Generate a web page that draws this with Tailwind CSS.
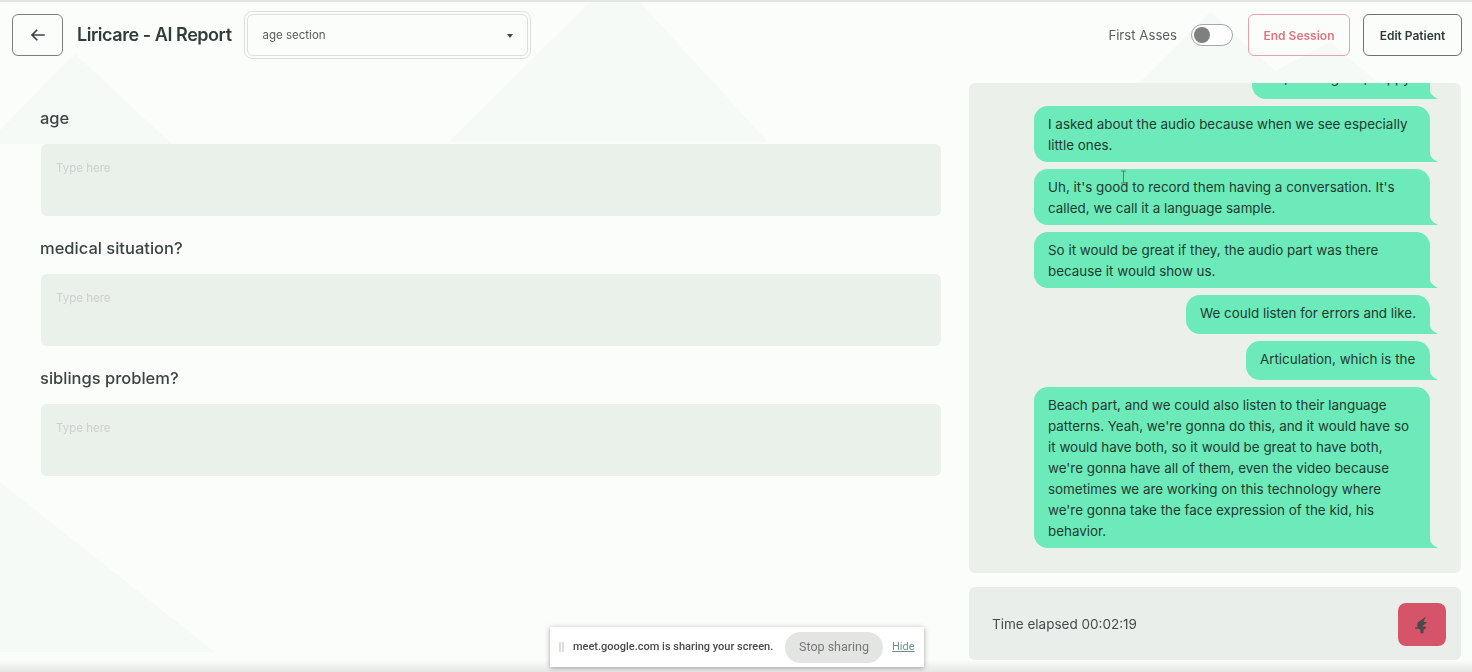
<!DOCTYPE html>
<html><head><meta charset="utf-8">
<script src="https://cdn.jsdelivr.net/npm/@tailwindcss/browser@4"></script>
<title>Liricare</title></head>
<body class="bg-[#fbfdfa] font-['Inter','Noto_Sans',sans-serif] text-[#2f3a36]">
<div class="relative w-[1472px] h-[672px] overflow-hidden border-t-2 border-[#e2e5e2] blur-[0.4px]">
  <svg class="absolute inset-0" width="1472" height="672" viewBox="0 0 1472 672" fill="#f6faf7">
    <polygon points="0,128 75,52 172,142 0,142"/>
    <polygon points="448,140 590,0 640,0 768,140"/>
    <polygon points="1138,82 1210,10 1290,82"/>
    <polygon points="1250,82 1330,40 1380,82"/>
    <polygon points="0,480 215,650 0,650"/>
  </svg>

  <div class="relative flex flex-col h-full">
    <header class="h-[81px] flex items-start pl-3 pr-[10px] pt-3">
      <button class="w-[51px] h-[42px] rounded-md border border-[#7b7f7c] flex items-center justify-center">
        <svg width="18" height="18" viewBox="0 0 24 24" fill="none" stroke="#3c4441" stroke-width="2.2"><path d="M21 12H4M11 5l-7 7 7 7"/></svg>
      </button>
      <h1 class="ml-[14px] mt-[10px] text-[18px] leading-[22px] font-semibold text-[#2f3d38] tracking-[-0.45px]">Liricare - AI Report</h1>
      <div class="ml-[12px] -mt-[3px] w-[287px] h-[48px] rounded-lg border border-[#dcdfdc] p-[2px]">
        <div class="h-full rounded-md border border-[#dcdfdc] flex items-center justify-between pl-[15px] pr-[14px] pt-px">
          <span class="text-[11.5px] text-[#555c59]">age section</span>
          <span class="w-0 h-0 border-x-[3.5px] border-x-transparent border-t-[4px] border-t-[#444]"></span>
        </div>
      </div>
      <div class="ml-auto flex items-center h-[42px]">
        <span class="text-[13.2px] pt-px text-[#5a615e]">First Asses</span>
        <div class="ml-[14px] w-[42px] h-[22px] rounded-full border border-[#a5a9a6] bg-[#fdfefd] flex items-center pl-[2px]">
          <div class="w-[16px] h-[16px] rounded-full bg-[#7d807e]"></div>
        </div>
        <button class="ml-[15px] w-[102px] h-[42px] pt-px rounded-md border border-[#e2a3ab] text-[12px] font-semibold text-[#dc7584]">End Session</button>
        <button class="ml-[13px] w-[99px] h-[42px] pt-px rounded-md border border-[#6f7370] text-[12px] font-semibold text-[#2f3a36]">Edit Patient</button>
      </div>
    </header>

    <main class="flex-1 flex min-h-0">
      <section class="w-[969px] pl-10 pr-7 pt-[23px] flex flex-col">
        <label class="text-[16.5px] leading-[24px] font-medium text-[#3b4441]">age</label>
        <div class="mt-[14px] mb-[20px] ml-px h-[72px] rounded-md bg-[#eaf0ea] px-[15px] pt-[16px] text-[11.5px] leading-4 text-[#ccd1cd]">Type here</div>
        <label class="text-[16.5px] leading-[24px] font-medium text-[#3b4441]">medical situation?</label>
        <div class="mt-[14px] mb-[20px] ml-px h-[72px] rounded-md bg-[#eaf0ea] px-[15px] pt-[16px] text-[11.5px] leading-4 text-[#ccd1cd]">Type here</div>
        <label class="text-[16.5px] leading-[24px] font-medium text-[#3b4441]">siblings problem?</label>
        <div class="mt-[14px] ml-px h-[72px] rounded-md bg-[#eaf0ea] px-[15px] pt-[16px] text-[11.5px] leading-4 text-[#ccd1cd]">Type here</div>
      </section>

      <aside class="w-[492px] flex flex-col">
        <div class="h-[490px] rounded-md bg-[#ebf0eb] overflow-hidden flex flex-col justify-end items-end pr-[31px] pb-[25px] gap-[7px] text-[13.4px] leading-[21px] text-[#1f3a30]">
          <div class="relative shrink-0 bg-[#6ceab9] rounded-[14px] rounded-br-none px-[14px] pt-[8px] pb-[10px] w-[178px]">Oh, that's great, happy<svg class="absolute -right-2 bottom-0" width="8" height="9" viewBox="0 0 8 9" fill="#6ceab9"><path d="M0 0C0 4 3 6 8 9H0z"/></svg></div>
          <div class="relative shrink-0 bg-[#6ceab9] rounded-[14px] rounded-br-none px-[14px] pt-[8px] pb-[6px] w-[396px]">I asked about the audio because when we see especially little ones.<svg class="absolute -right-2 bottom-0" width="8" height="9" viewBox="0 0 8 9" fill="#6ceab9"><path d="M0 0C0 4 3 6 8 9H0z"/></svg></div>
          <div class="relative shrink-0 bg-[#6ceab9] rounded-[14px] rounded-br-none px-[14px] pt-[8px] pb-[6px] w-[396px]">Uh, it's good to record them having a conversation. It's called, we call it a language sample.<svg class="absolute -right-2 bottom-0" width="8" height="9" viewBox="0 0 8 9" fill="#6ceab9"><path d="M0 0C0 4 3 6 8 9H0z"/></svg></div>
          <div class="relative shrink-0 bg-[#6ceab9] rounded-[14px] rounded-br-none px-[14px] pt-[8px] pb-[6px] w-[396px]">So it would be great if they, the audio part was there because it would show us.<svg class="absolute -right-2 bottom-0" width="8" height="9" viewBox="0 0 8 9" fill="#6ceab9"><path d="M0 0C0 4 3 6 8 9H0z"/></svg></div>
          <div class="relative shrink-0 bg-[#6ceab9] rounded-[14px] rounded-br-none px-[14px] pt-[8px] pb-[10px]">We could listen for errors and like.<svg class="absolute -right-2 bottom-0" width="8" height="9" viewBox="0 0 8 9" fill="#6ceab9"><path d="M0 0C0 4 3 6 8 9H0z"/></svg></div>
          <div class="relative shrink-0 bg-[#6ceab9] rounded-[14px] rounded-br-none px-[14px] pt-[8px] pb-[10px] w-[184px]">Articulation, which is the<svg class="absolute -right-2 bottom-0" width="8" height="9" viewBox="0 0 8 9" fill="#6ceab9"><path d="M0 0C0 4 3 6 8 9H0z"/></svg></div>
          <div class="relative shrink-0 bg-[#6ceab9] rounded-[14px] rounded-br-none px-[14px] pt-[8px] pb-[6px] w-[396px]">Beach part, and we could also listen to their language patterns. Yeah, we're gonna do this, and it would have so it would have both, so it would be great to have both, we're gonna have all of them, even the video because sometimes we are working on this technology where we're gonna take the face expression of the kid, his behavior.<svg class="absolute -right-2 bottom-0" width="8" height="9" viewBox="0 0 8 9" fill="#6ceab9"><path d="M0 0C0 4 3 6 8 9H0z"/></svg></div>
        </div>
        <div class="mt-[14px] h-[73px] rounded-md bg-[#e9eeea] flex items-center justify-between pl-[23px] pr-[15px] pt-[2px]">
          <span class="text-[13.5px] text-[#454c49]">Time elapsed 00:02:19</span>
          <button class="w-[48px] h-[43px] rounded-lg bg-[#d5546a] flex items-center justify-center">
            <svg width="18" height="18" viewBox="0 0 24 24" fill="#484a4c"><path d="M17 1 6 9c-.6 2-.5 4 .5 6H3v2h5l2 2v4h4v-5l3-1v-3h-5l7-6h-5l3-7z"/></svg>
          </button>
        </div>
      </aside>
    </main>
  </div>

  <svg class="absolute left-[1120px] top-[168px]" width="7" height="14" viewBox="0 0 7 14" fill="none" stroke="#7d6a70"><path d="M1 1h5M3.5 1v12M1 13h5"/></svg>

  <div class="absolute inset-x-0 bottom-0 h-[12px] bg-gradient-to-t from-[#e4e7e4] to-transparent"></div>

  <div class="absolute left-[550px] top-[625px] w-[374px] h-[40px] bg-white shadow-[0_1px_5px_rgba(0,0,0,0.35)] flex items-center pl-[9px]">
    <span class="flex gap-px"><i class="block w-[2px] h-[10px] bg-[#dcdcdc]"></i><i class="block w-[2px] h-[10px] bg-[#dcdcdc]"></i></span>
    <span class="ml-[9px] w-[202px] shrink-0 whitespace-nowrap text-[11px] text-[#4a4a4a] font-['Roboto',sans-serif] font-medium">meet.google.com is sharing your screen.</span>
    <span class="ml-[10px] shrink-0 w-[98px] h-[31px] rounded-full bg-[#e3e5e3] flex items-center justify-center text-[12.5px] text-[#777] font-['Roboto',sans-serif]">Stop sharing</span>
    <span class="ml-[9px] text-[11px] text-[#6f8f88] underline font-['Roboto',sans-serif]">Hide</span>
  </div>
</div>
</body></html>
